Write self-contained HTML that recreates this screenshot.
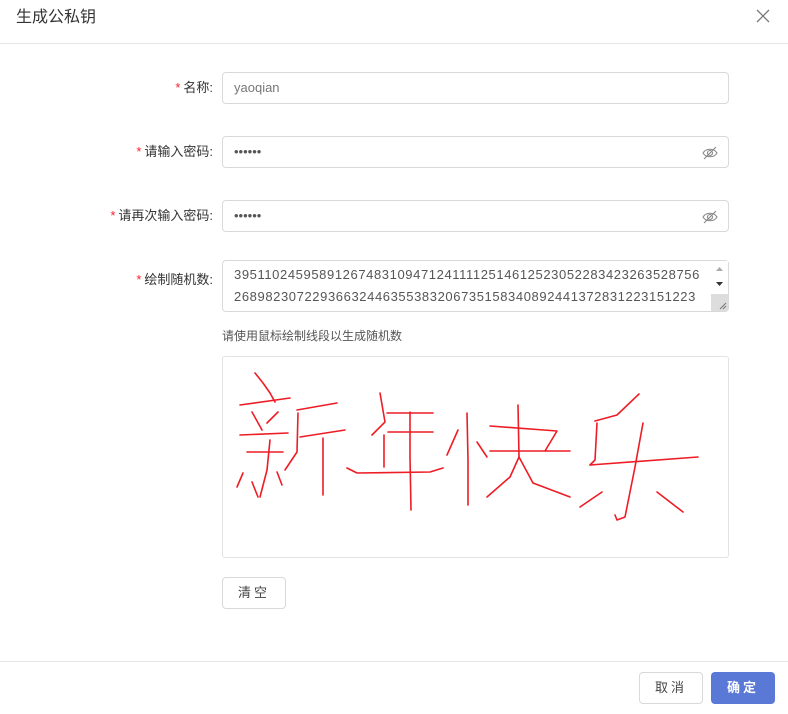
<!DOCTYPE html><html><head><meta charset="utf-8"><style>
*{box-sizing:border-box;margin:0;padding:0}
body{width:788px;height:714px;background:#fff;font-family:"Liberation Sans","Noto Sans CJK SC",sans-serif;font-size:13px;color:#333;position:relative;overflow:hidden}
.a{position:absolute}
.hd{left:0;top:0;width:788px;height:44px;border-bottom:1px solid #e5e5e5}
.t{left:16px;top:8px;font-size:16px;line-height:20px;color:#333}
.lbl{right:575px;text-align:right;font-size:13px;color:#333;line-height:16px;white-space:nowrap}
.lbl b{color:#f5222d;font-weight:normal;margin-right:3px}
.in{left:222px;width:507px;height:32px;border:1px solid #d9d9d9;border-radius:4px;padding-left:11px;line-height:30px;color:#555;font-size:13px}
.eye{right:10px;top:9px}
.btn{border:1px solid #d9d9d9;border-radius:4px;text-align:center;font-size:13px;letter-spacing:3px;color:#444}
</style></head><body>
<div class="a hd"></div>
<div class="a t">生成公私钥</div>
<svg class="a" style="left:756px;top:9px" width="14" height="14" viewBox="0 0 14 14"><path d="M1 1L13 13M13 1L1 13" stroke="#777" stroke-width="1.3"/></svg>

<div class="a lbl" style="top:80px"><b>*</b>名称:</div>
<div class="a in" style="top:72px;color:#777">yaoqian</div>
<div class="a lbl" style="top:144px"><b>*</b>请输入密码:</div>
<div class="a in" style="top:136px">••••••<svg class="a eye" width="16" height="14" viewBox="0 0 16 14"><path d="M1 7C4 2 12 2 15 7C12 12 4 12 1 7Z M5.5 7a2.5 2.5 0 1 0 5 0a2.5 2.5 0 1 0-5 0 M2 13L14 1" fill="none" stroke="#888" stroke-width="1.1"/></svg></div>
<div class="a lbl" style="top:208px"><b>*</b>请再次输入密码:</div>
<div class="a in" style="top:200px">••••••<svg class="a eye" width="16" height="14" viewBox="0 0 16 14"><path d="M1 7C4 2 12 2 15 7C12 12 4 12 1 7Z M5.5 7a2.5 2.5 0 1 0 5 0a2.5 2.5 0 1 0-5 0 M2 13L14 1" fill="none" stroke="#888" stroke-width="1.1"/></svg></div>
<div class="a lbl" style="top:272px"><b>*</b>绘制随机数:</div>
<div class="a in" style="top:260px;height:52px;line-height:22px;padding-top:3px;font-size:13px;letter-spacing:0.6px;color:#555;overflow:hidden;white-space:nowrap">395110245958912674831094712411112514612523052283423263528756<br>26898230722936632446355383206735158340892441372831223151223</div>
<div class="a" style="left:711px;top:261px;width:17px;height:50px;background:#fff"></div>
<svg class="a" style="left:711px;top:261px" width="17" height="50"><path d="M5 10L8.5 6L12 10Z" fill="#aaa"/><path d="M5 21L8.5 25L12 21Z" fill="#333"/><rect x="0" y="33" width="17" height="17" fill="#ddd"/><path d="M9 48L15 42M12 48L15 45" stroke="#777"/></svg>
<div class="a" style="left:222px;top:327px;color:#555;font-size:12px">请使用鼠标绘制线段以生成随机数</div>
<div class="a" style="left:222px;top:356px;width:507px;height:202px;border:1px solid #e3e3e3;border-radius:3px"></div>
<svg class="a" style="left:0;top:0" width="788" height="714"><g fill="none" stroke="#ee1c25" stroke-width="1.6" stroke-linecap="round" stroke-linejoin="round">
<path d="M255 373L263 383L270 393L275 402"/><path d="M240 405L290 398"/><path d="M252 412L262 430"/><path d="M278 412L267 423"/><path d="M240 435L288 433"/><path d="M247 452L283 452"/><path d="M270 440L267 470L260 497"/><path d="M252 482L258 497"/><path d="M243 473L237 487"/><path d="M277 472L282 485"/><path d="M297 410L337 403"/><path d="M298 413L297 452L285 470"/><path d="M300 437L345 430"/><path d="M323 438L323 495"/>
<path d="M380 393L385 422L372 435"/><path d="M387 413L433 413"/><path d="M388 432L433 432"/><path d="M384 435L384 467"/><path d="M347 468L357 473L430 472L443 468"/><path d="M410 412L410 457L411 510"/>
<path d="M467 413L468 460L468 505"/><path d="M458 430L447 455"/><path d="M477 442L487 457"/><path d="M490 426L557 431L545 451"/><path d="M490 451L570 451"/><path d="M518 405L519 457L510 477L487 497"/><path d="M519 457L533 483L570 497"/>
<path d="M639 394L617 415L595 421"/><path d="M597 423L595 460L590 465"/><path d="M590 465L698 457"/><path d="M643 423L635 467L625 517L617 520L615 515"/><path d="M602 492L580 507"/><path d="M657 492L683 512"/>
</g></svg>
<div class="a btn" style="left:222px;top:577px;width:64px;height:32px;line-height:30px">清空</div>
<div class="a" style="left:0;top:661px;width:788px;border-top:1px solid #e5e5e5"></div>
<div class="a btn" style="left:639px;top:672px;width:64px;height:32px;line-height:30px">取消</div>
<div class="a btn" style="left:711px;top:672px;width:64px;height:32px;line-height:32px;background:#5a78d6;border:none;color:#fff;font-weight:bold">确定</div>
</body></html>
